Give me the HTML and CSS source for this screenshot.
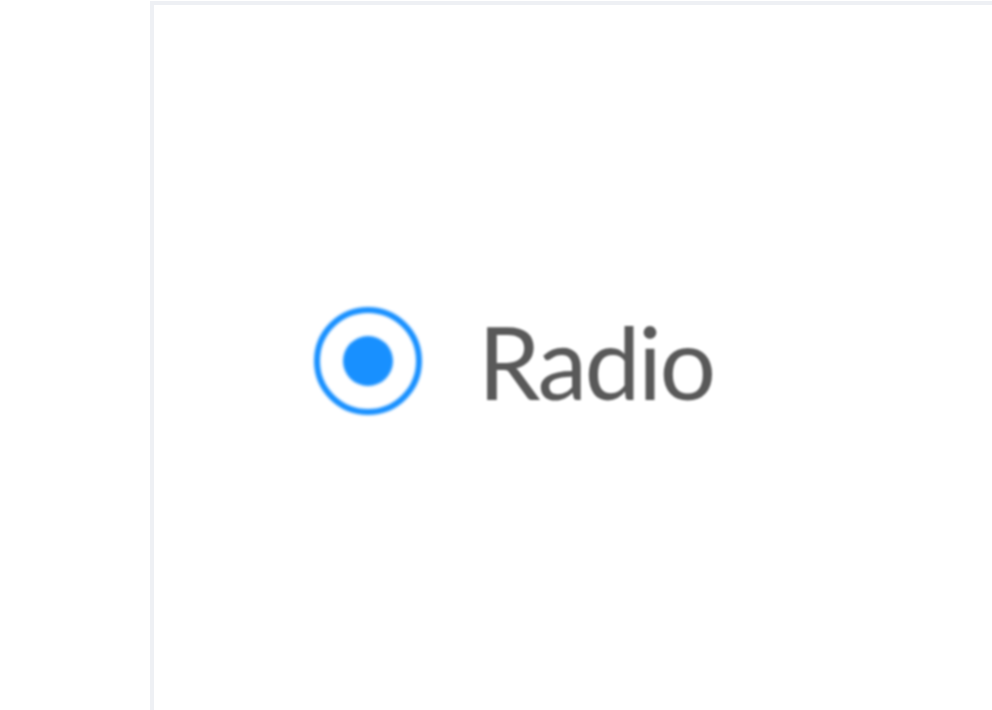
FILE: index.html
```html
<!DOCTYPE html>
<html>
<head>
<meta charset="utf-8">
<link rel="stylesheet" href="styles.css">
</head>
<body>
<div class="card">
  <label class="radio">
    <span class="radio-circle"><span class="radio-dot"></span></span>
    <span class="radio-label">Radio</span>
  </label>
</div>
</body>
</html>
```
FILE: styles.css
```css
html, body {
  margin: 0;
  padding: 0;
  background: #ffffff;
  overflow: hidden;
}
body {
  width: 992px;
  height: 710px;
}
.card {
  margin-left: 150px;
  margin-top: 1px;
  height: 709px;
  border-left: 4px solid #eef0f4;
  border-top: 4px solid #eef0f4;
  box-sizing: border-box;
  padding-left: 160px;
  padding-top: 302px;
}
.radio {
  display: flex;
  align-items: center;
  gap: 56px;
}
.radio-circle {
  width: 108px;
  height: 108px;
  box-sizing: border-box;
  border: 6px solid #1890ff;
  border-radius: 50%;
  display: flex;
  align-items: center;
  justify-content: center;
  filter: blur(1.4px);
}
.radio-dot {
  width: 50px;
  height: 50px;
  border-radius: 50%;
  background: #1890ff;
}
.radio-label {
  font-family: "Lato", "Noto Sans", sans-serif;
  font-weight: 400;
  font-size: 100px;
  letter-spacing: -2.5px;
  line-height: 108px;
  color: rgba(0, 0, 0, 0.65);
  filter: blur(1px);
}
```
